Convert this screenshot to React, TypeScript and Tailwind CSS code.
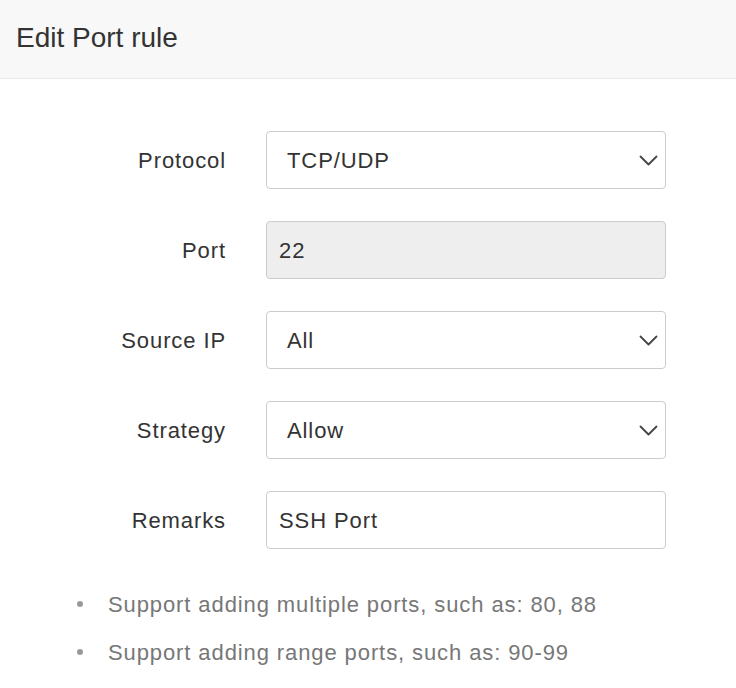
import React from 'react'

function Chevron() {
  return (
    <svg width="19" height="11" viewBox="0 0 19 11" fill="none" className="shrink-0">
      <path d="M1.5 1.5l8 8 8-8" stroke="#444" strokeWidth="1.8" strokeLinecap="round" strokeLinejoin="round" />
    </svg>
  )
}

function Row({ label, children }: { label: string; children: React.ReactNode }) {
  return (
    <div className="flex items-center gap-[40px]">
      <div className="w-[226px] text-right text-[22px] tracking-[0.9px] text-[#333]">{label}</div>
      {children}
    </div>
  )
}

function SelectBox({ value }: { value: string }) {
  return (
    <div className="flex h-[58px] w-[400px] items-center justify-between rounded-[4px] border border-[#ccc] bg-white pl-[20px] pr-[7px] text-[22px] tracking-[0.9px] text-[#333]">
      <span>{value}</span>
      <Chevron />
    </div>
  )
}

function InputBox({ value, disabled }: { value: string; disabled?: boolean }) {
  return (
    <div
      className={
        disabled
          ? 'flex h-[58px] w-[400px] items-center rounded-[4px] border border-[#ccc] bg-[#eee] pl-[12px] text-[22px] tracking-[0.9px] text-[#333]'
          : 'flex h-[58px] w-[400px] items-center rounded-[4px] border border-[#ccc] bg-white pl-[12px] text-[22px] tracking-[0.9px] text-[#333]'
      }
    >
      {value}
    </div>
  )
}

export default function App() {
  const tips = ['Support adding multiple ports, such as: 80, 88', 'Support adding range ports, such as: 90-99']

  return (
    <div className="h-[688px] w-[736px] overflow-hidden bg-white font-['Liberation_Sans',Arial,sans-serif]">
      <div className="flex h-[79px] items-center border-b border-[#eaeaea] bg-[#f8f8f8] px-[16px] pb-[2px]">
        <h1 className="text-[28px] text-[#333]">Edit Port rule</h1>
      </div>

      <div className="flex flex-col gap-[32px] pt-[52px]">
        <Row label="Protocol">
          <SelectBox value="TCP/UDP" />
        </Row>
        <Row label="Port">
          <InputBox value="22" disabled />
        </Row>
        <Row label="Source IP">
          <SelectBox value="All" />
        </Row>
        <Row label="Strategy">
          <SelectBox value="Allow" />
        </Row>
        <Row label="Remarks">
          <InputBox value="SSH Port" />
        </Row>
      </div>

      <ul className="mt-[31px]">
        {tips.map((t) => (
          <li key={t} className="flex h-[48px] items-center text-[22px] tracking-[0.9px] text-[#777]">
            <span className="ml-[77px] mr-[25px] h-[6px] w-[6px] rounded-full bg-[#999]" />
            {t}
          </li>
        ))}
      </ul>
    </div>
  )
}
